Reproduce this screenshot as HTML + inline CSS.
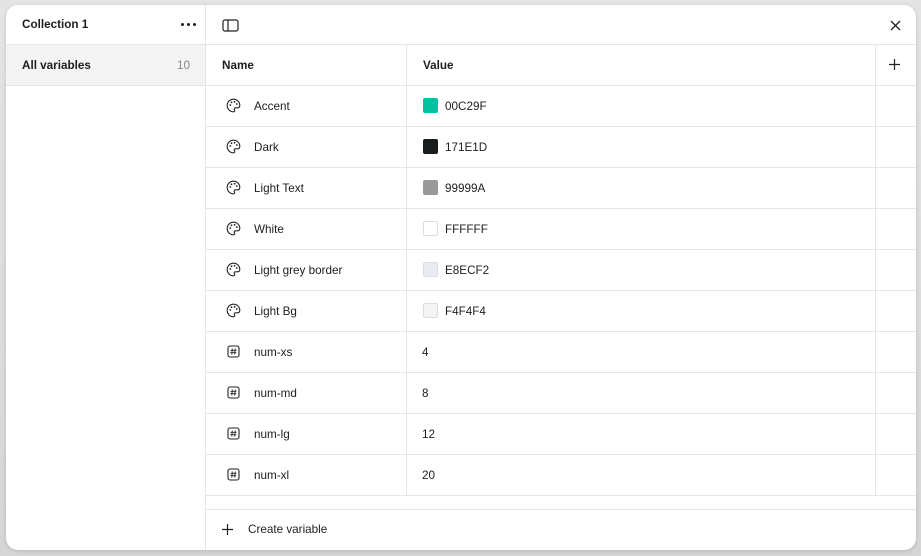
<!DOCTYPE html><html><head><style>
body{margin:0;width:921px;height:556px;background:linear-gradient(#e4e4e4,#d6d6d6);font-family:"Liberation Sans",sans-serif;font-size:11.7px;color:#1e1e1e;position:relative;overflow:hidden}
.p{position:absolute;left:6px;top:5px;width:910px;height:545px;background:#fff;border-radius:12px;overflow:hidden;box-shadow:0 1px 4px rgba(0,0,0,.15)}
.a{position:absolute}
.hl{position:absolute;height:1px;background:#e6e6e6}
.vl{position:absolute;width:1px;background:#e6e6e6}
.b{font-weight:bold}
.sw{position:absolute;left:417px;width:15px;height:15px;border-radius:2px;box-sizing:border-box}
.dot{position:absolute;width:3px;height:3px;border-radius:50%;background:#222;top:18px}
</style></head><body><div class="p">
<div class="vl" style="left:199px;top:0;height:545px"></div>
<div class="hl" style="left:0;top:39px;width:910px"></div>
<div class="a" style="left:0;top:40px;width:199px;height:40px;background:#f4f4f4"></div>
<div class="hl" style="left:0;top:80px;width:910px"></div>
<div class="a b" style="left:16px;top:13px">Collection 1</div>
<div class="dot" style="left:175px"></div><div class="dot" style="left:181px"></div><div class="dot" style="left:187px"></div>
<div class="a b" style="left:16px;top:54px">All variables</div>
<div class="a" style="left:171px;top:54px;color:#888">10</div>
<svg class="a" style="left:216px;top:14px" width="17" height="13"><rect x="1" y="1" width="15" height="11" rx="2" fill="none" stroke="#222" stroke-width="1.2"/><line x1="6" y1="1" x2="6" y2="12" stroke="#222" stroke-width="1.2"/></svg>
<svg class="a" style="left:884px;top:15px" width="11" height="11"><path d="M1 1L10 10M10 1L1 10" stroke="#222" stroke-width="1.3"/></svg>
<div class="vl" style="left:400px;top:40px;height:450px"></div>
<div class="vl" style="left:869px;top:40px;height:450px"></div>
<div class="a b" style="left:216px;top:54px">Name</div>
<div class="a b" style="left:417px;top:54px">Value</div>
<svg class="a" style="left:883px;top:54px" width="11" height="11"><path d="M5.5 0V11M0 5.5H11" stroke="#222" stroke-width="1.2"/></svg>
<div id="rows"></div>
<div class="hl" style="left:199px;top:504px;width:711px"></div>
<svg class="a" style="left:216px;top:519px" width="11" height="11"><path d="M5.5 0V11M0 5.5H11" stroke="#222" stroke-width="1.2"/></svg>
<div class="a" style="left:242px;top:518px">Create variable</div>
</div>
<script>
var d=[["Accent","00C29F","#00c29f"],["Dark","171E1D","#171e1d"],["Light Text","99999A","#99999a"],["White","FFFFFF","#fff"],["Light grey border","E8ECF2","#e8ecf2"],["Light Bg","F4F4F4","#f4f4f4"],["num-xs","4"],["num-md","8"],["num-lg","12"],["num-xl","20"]];
var h="";d.forEach(function(r,i){var t=81+i*41;
h+='<div class="hl" style="left:199px;top:'+(t+40)+'px;width:711px"></div>';
if(r[2]){h+='<svg class="a" style="left:220px;top:'+(t+12)+'px" width="15" height="15"><path d="M7.5 1.2A6.3 6.3 0 1 0 7.5 13.8C8.8 13.8 9 12.6 8.4 11.8C7.8 11 8.3 9.8 9.5 9.8H11.5C12.9 9.8 13.8 8.8 13.8 7.3A6.3 6.1 0 0 0 7.5 1.2Z" fill="none" stroke="#222" stroke-width="1.1"/><circle cx="4.3" cy="7" r=".9" fill="#222"/><circle cx="5.5" cy="4.3" r=".9" fill="#222"/><circle cx="8.6" cy="3.8" r=".9" fill="#222"/><circle cx="10.8" cy="6" r=".9" fill="#222"/></svg>';
h+='<div class="sw" style="top:'+(t+12)+'px;background:'+r[2]+';'+(i>=3?'border:1px solid #ddd':'')+'"></div><div class="a" style="left:439px;top:'+(t+14)+'px">'+r[1]+'</div>';}
else{h+='<svg class="a" style="left:221px;top:'+(t+13)+'px" width="13" height="13"><rect x="1" y="1" width="11" height="11" rx="2" fill="none" stroke="#222" stroke-width="1.1"/><path d="M5.3 3.5L4.8 9.5M8.2 3.5L7.7 9.5M3.5 5.3H9.5M3.3 7.7H9.3" stroke="#222" stroke-width=".9"/></svg><div class="a" style="left:416px;top:'+(t+14)+'px">'+r[1]+'</div>';}
h+='<div class="a" style="left:248px;top:'+(t+14)+'px">'+r[0]+'</div>';});
document.getElementById("rows").outerHTML=h;
</script></body></html>
